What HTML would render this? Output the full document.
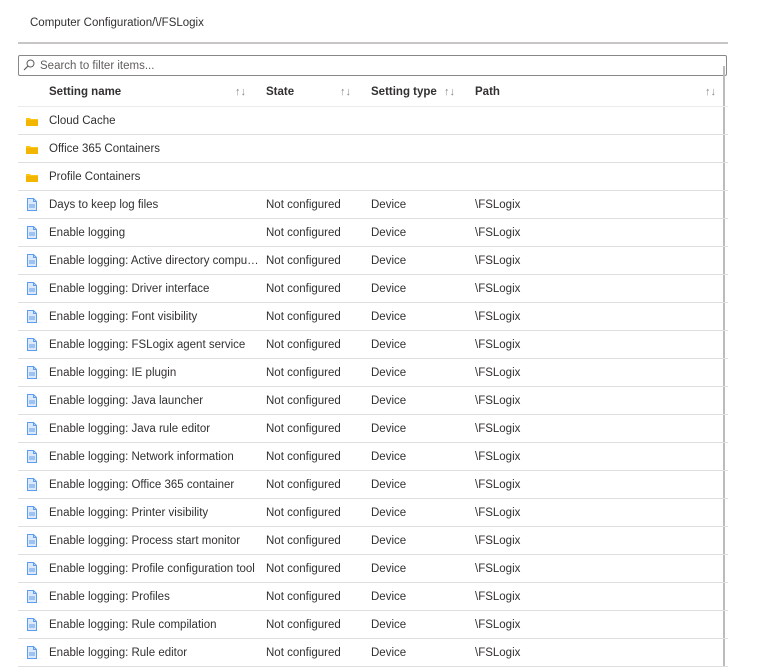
<!DOCTYPE html>
<html><head><meta charset="utf-8"><style>
*{margin:0;padding:0;box-sizing:border-box}
body{width:768px;height:663px;overflow:hidden;background:#fff;font-family:"Liberation Sans",sans-serif;font-size:11.5px;color:#323130;position:relative}
.abs{position:absolute;white-space:nowrap}
.row{position:absolute;left:18px;width:710px;height:28px;border-bottom:1px solid #e1dfdd}
.row span{position:absolute;top:8px;white-space:nowrap}
.c1{left:31px;width:210px;overflow:hidden;text-overflow:ellipsis}
.c2{left:248px}.c3{left:353px}.c4{left:457px}
.ic{position:absolute;left:8px;top:9px}
.hdr{position:absolute;top:86px;color:#323130;font-weight:600}
.ar{position:absolute;top:86px;color:#8a8886;font-size:11px}
</style></head><body>
<div class="abs" style="left:56px;top:-6px;width:6px;height:3px;background:#444"></div>
<div class="abs" style="left:30px;top:17px;">Computer Configuration/\/FSLogix</div>
<div class="abs" style="left:18px;top:42px;width:710px;height:2px;background:#c8c6c4"></div>
<div class="abs" style="left:18px;top:55px;width:709px;height:21px;border:1px solid #8a8886;border-radius:2px"></div>
<svg class="abs" style="left:23px;top:59px" width="12" height="12" viewBox="0 0 12 12"><circle cx="7.5" cy="4.5" r="3.5" fill="none" stroke="#605e5c" stroke-width="1"/><path d="M5 7L1 11" stroke="#605e5c" stroke-width="1.2"/></svg>
<div class="abs" style="left:40px;top:60px;color:#605e5c">Search to filter items...</div>
<div class="abs" style="left:723px;top:66px;width:2px;height:600px;background:#bdbbb9"></div>
<div class="hdr" style="left:49px">Setting name</div>
<div class="ar" style="left:235px">↑↓</div>
<div class="hdr" style="left:266px">State</div>
<div class="ar" style="left:340px">↑↓</div>
<div class="hdr" style="left:371px">Setting type</div>
<div class="ar" style="left:444px">↑↓</div>
<div class="hdr" style="left:475px">Path</div>
<div class="ar" style="left:705px">↑↓</div>
<div class="abs" style="left:18px;top:106px;width:710px;height:1px;background:#edebe9"></div>
<div id="rows"></div>
<script>
var folder='<svg class="ic" width="12" height="12" viewBox="0 0 12 12"><path d="M0 2h4l1 1h7v7H0z" fill="#ffc61a"/><path d="M0 4h12v6H0z" fill="#f2b500"/></svg>';
var file='<svg class="ic" style="left:9px;top:7px" width="10" height="13" viewBox="0 0 10 13"><path d="M0.5 0.5h6l3 3v9h-9z" fill="#dbe9fb" stroke="#5c9ded"/><path d="M6.5 0.5v3h3" fill="none" stroke="#5c9ded"/><path d="M2 7h6M2 9h6" stroke="#5c9ded"/></svg>';
var f=["Cloud Cache","Office 365 Containers","Profile Containers"];
var s=["Days to keep log files","Enable logging","Enable logging: Active directory computer account","Enable logging: Driver interface","Enable logging: Font visibility","Enable logging: FSLogix agent service","Enable logging: IE plugin","Enable logging: Java launcher","Enable logging: Java rule editor","Enable logging: Network information","Enable logging: Office 365 container","Enable logging: Printer visibility","Enable logging: Process start monitor","Enable logging: Profile configuration tool","Enable logging: Profiles","Enable logging: Rule compilation","Enable logging: Rule editor"];
var h='',y=107;
f.forEach(function(n){h+='<div class="row" style="top:'+y+'px">'+folder+'<span class="c1">'+n+'</span></div>';y+=28;});
s.forEach(function(n){h+='<div class="row" style="top:'+y+'px">'+file+'<span class="c1">'+n+'</span><span class="c2">Not configured</span><span class="c3">Device</span><span class="c4">\\FSLogix</span></div>';y+=28;});
document.getElementById('rows').innerHTML=h;
</script>
</body></html>
